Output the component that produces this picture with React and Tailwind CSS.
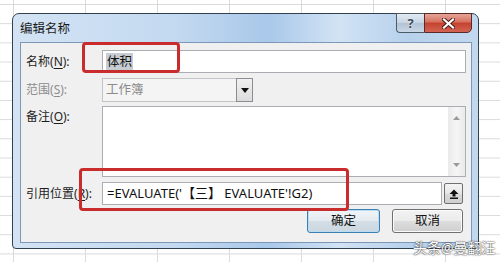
import React from 'react';

const ui = "font-['Noto_Sans','Noto_Sans_CJK_SC',sans-serif]";

const Label = ({ text, mnemonic, disabled }) => (
  <div className={`w-[81px] shrink-0 pl-[5px] text-[12px] leading-[14px] ${disabled ? 'text-[#8d8d8d]' : 'text-[#1e1e1e]'}`}>
    {text}(<span className="underline underline-offset-2">{mnemonic}</span>):
  </div>
);

export default function App() {
  return (
    <div
      className={`relative w-[500px] h-[262px] overflow-hidden bg-white pt-[13px] pl-[12px] ${ui} bg-[linear-gradient(to_right,#d9dadb_1px,transparent_1px),linear-gradient(to_bottom,#d9dadb_1px,transparent_1px)] [background-size:72px_19.2px] [background-position:13px_4px]`}
    >
      {/* dialog window */}
      <div className="w-[467px] h-[236px] flex flex-col rounded-t-[7px] rounded-b-[4px] border border-[#33404d] bg-[linear-gradient(to_right,#d3e3f4,#c3d9f0_35%,#a9c8ea_55%,#d2e3f4_70%,#b7d1ec_85%,#c2d8ef)] pl-[7px] pr-[6px] pb-[5px]">
        {/* title bar */}
        <div className="h-[28px] flex items-start shrink-0">
          <div className="pt-[8px] text-[12.5px] leading-[14px] text-[#1b1b1b]">编辑名称</div>
          <div className="ml-auto -mt-px flex">
            <div className="w-[28px] h-[20px] flex items-center justify-center rounded-bl-[4px] border border-[#4d5a68] border-r-0 bg-[linear-gradient(to_bottom,#e3ebf4,#c5d3e2_50%,#b2c3d6_51%,#c9d7e6)] text-[13px] font-bold leading-none text-[#3c4a5a] [text-shadow:0_0_2px_#ffffff]">
              ?
            </div>
            <div className="w-[48px] h-[20px] flex items-center justify-center rounded-br-[5px] border border-[#5a2a2a] bg-[linear-gradient(to_bottom,#e5a597,#d7705f_45%,#c5412e_50%,#d26454)]">
              <svg width="13" height="11" viewBox="0 0 13 11">
                <path d="M2 1.5 L11 9.5 M11 1.5 L2 9.5" stroke="#4a1a14" strokeWidth="4" strokeLinecap="square" />
                <path d="M2 1.5 L11 9.5 M11 1.5 L2 9.5" stroke="#ffffff" strokeWidth="2.2" strokeLinecap="square" />
              </svg>
            </div>
          </div>
        </div>

        {/* client area */}
        <div className="flex-1 border border-[#7c97b8] bg-[#f0f0f0] pt-[7px] pr-[5px] flex flex-col">
          {/* name */}
          <div className="h-[23px] flex items-center">
            <Label text="名称" mnemonic="N" />
            <div className="flex-1 h-full border border-[#abadb3] bg-white flex items-center pl-[3px]">
              <span className="bg-[#c7ccd3] px-px text-[12.5px] leading-[18px] text-[#111]">体积</span>
            </div>
          </div>

          {/* scope */}
          <div className="h-[24px] mt-[5px] flex items-center">
            <Label text="范围" mnemonic="S" disabled />
            <div className="w-[151px] h-full flex border border-[#c2c4c8] bg-[#f4f4f4]">
              <div className="flex-1 flex items-center pl-[3px] text-[12.5px] text-[#8a8a8a]">工作簿</div>
              <div className="w-[17px] -m-px h-[24px] flex items-center justify-center border border-[#8a8d92] bg-[linear-gradient(to_bottom,#f1f1f1,#dcdcdc)]">
                <svg width="8" height="5" viewBox="0 0 8 5">
                  <path d="M0 0 H8 L4 5 Z" fill="#111" />
                </svg>
              </div>
            </div>
          </div>

          {/* comment */}
          <div className="h-[71px] mt-[4px] flex items-start">
            <div className="pt-[4px]">
              <Label text="备注" mnemonic="O" />
            </div>
            <div className="flex-1 h-full border border-[#abadb3] bg-white flex">
              <div className="flex-1" />
              <div className="w-[17px] flex flex-col items-center justify-between py-[9px] bg-[linear-gradient(to_right,#eaeaea,#f5f5f5,#eaeaea)]">
                <svg width="7" height="4" viewBox="0 0 7 4">
                  <path d="M0 4 H7 L3.5 0 Z" fill="#9a9a9a" />
                </svg>
                <svg width="7" height="4" viewBox="0 0 7 4">
                  <path d="M0 0 H7 L3.5 4 Z" fill="#9a9a9a" />
                </svg>
              </div>
            </div>
          </div>

          {/* refers to */}
          <div className="h-[23px] mt-[5px] flex items-center">
            <Label text="引用位置" mnemonic="R" />
            <div className="flex-1 h-full border border-[#abadb3] bg-white flex items-center pl-[4px] text-[13px] text-[#111] whitespace-nowrap">
              =EVALUATE('【三】 EVALUATE'!G2)
            </div>
            <div className="w-[19px] h-[21px] ml-[2px] mr-[3px] flex items-center justify-center rounded-[2px] border border-[#707070] bg-[linear-gradient(to_bottom,#f4f4f4,#e6e6e6_50%,#d9d9d9_51%,#cfcfcf)]">
              <svg width="10" height="10" viewBox="0 0 10 10">
                <path d="M5 0.5 L9.5 5 H6.5 V7.5 H3.5 V5 H0.5 Z" fill="#111" />
                <rect x="1" y="8.5" width="8" height="1.5" fill="#111" />
              </svg>
            </div>
          </div>

          {/* buttons */}
          <div className="h-[24px] mt-[4px] flex justify-end gap-[12px] pr-[3px]">
            <button className="w-[73px] h-full rounded-[3px] border border-[#3c7fb1] bg-[linear-gradient(to_bottom,#f0f4f7,#e4ebf0_50%,#d3dde5_51%,#ccd7e0)] shadow-[inset_0_0_0_1px_#b9dcf3] text-[12.5px] text-[#111]">
              确定
            </button>
            <button className="w-[71px] h-full rounded-[3px] border border-[#707070] bg-[linear-gradient(to_bottom,#f2f2f2,#ebebeb_50%,#dddddd_51%,#cfcfcf)] shadow-[inset_0_0_0_1px_#fbfbfb] text-[12.5px] text-[#111]">
              取消
            </button>
          </div>
        </div>
      </div>

      {/* red annotation boxes */}
      <div className="absolute left-[82px] top-[42px] w-[98px] h-[31px] rounded-[4px] border-[3px] border-[#c92c2c]" />
      <div className="absolute left-[79px] top-[168px] w-[270px] h-[43px] rounded-[4px] border-[3px] border-[#c92c2c]" />

      {/* watermark */}
      <div className="absolute left-[413px] top-[239px] text-[14px] leading-[18px] text-white [text-shadow:0_0_2px_#333,0_0_1px_#333]">
        头条@曼翻汪
      </div>
    </div>
  );
}
